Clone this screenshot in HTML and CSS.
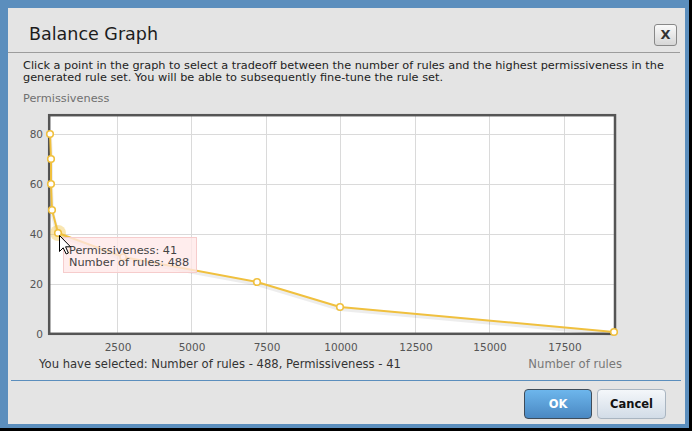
FILE: index.html
```html
<!DOCTYPE html>
<html>
<head>
<meta charset="utf-8">
<link rel="stylesheet" href="styles.css">
</head>
<body>
<div class="frame">
  <div class="dialog">
    <div class="header">
      <div class="title">Balance Graph</div>
      <button class="close">X</button>
    </div>
    <p class="desc">Click a point in the graph to select a tradeoff between the number of rules and the highest permissiveness in the<br>generated rule set. You will be able to subsequently fine-tune the rule set.</p>
    <div class="axis-title">Permissiveness</div>
    <svg class="chart" width="610" height="250" viewBox="23 106 610 250" xmlns="http://www.w3.org/2000/svg">
      <rect x="49" y="115" width="566" height="219" fill="#ffffff"/>
      <g stroke="#dadada" stroke-width="1">
        <line x1="117.5" y1="116" x2="117.5" y2="333"/>
        <line x1="191.5" y1="116" x2="191.5" y2="333"/>
        <line x1="266.5" y1="116" x2="266.5" y2="333"/>
        <line x1="340.5" y1="116" x2="340.5" y2="333"/>
        <line x1="415.5" y1="116" x2="415.5" y2="333"/>
        <line x1="489.5" y1="116" x2="489.5" y2="333"/>
        <line x1="564.5" y1="116" x2="564.5" y2="333"/>
        <line x1="50" y1="134.5" x2="614" y2="134.5"/>
        <line x1="50" y1="184.5" x2="614" y2="184.5"/>
        <line x1="50" y1="234.5" x2="614" y2="234.5"/>
        <line x1="50" y1="284.5" x2="614" y2="284.5"/>
      </g>
      <rect x="49.2" y="115.2" width="565.8" height="218.6" fill="none" stroke="#555555" stroke-width="2.5"/>
      <g class="ylab" text-anchor="end">
        <text x="43" y="138">80</text>
        <text x="43" y="188">60</text>
        <text x="43" y="238">40</text>
        <text x="43" y="288">20</text>
        <text x="43" y="338">0</text>
      </g>
      <g class="xlab" text-anchor="middle">
        <text x="118" y="351">2500</text>
        <text x="192" y="351">5000</text>
        <text x="267" y="351">7500</text>
        <text x="341" y="351">10000</text>
        <text x="416" y="351">12500</text>
        <text x="490" y="351">15000</text>
        <text x="565" y="351">17500</text>
      </g>
      <polyline points="50,134 51,159 51,184 52,210 58,233 123,257 257,282 340,307 614,332" fill="none" stroke="rgba(0,0,0,0.07)" stroke-width="4" transform="translate(0,2)"/>
      <polyline points="50,134 51,159 51,184 52,210 58,233 123,257 257,282 340,307 614,332" fill="none" stroke="#f0c03e" stroke-width="2" stroke-linejoin="round"/>
      <circle cx="58" cy="233" r="8" fill="rgba(240,192,62,0.4)"/>
      <g fill="#ffffff" stroke="#f0c03e" stroke-width="1.6">
        <circle cx="50" cy="134" r="3.3"/>
        <circle cx="51" cy="159" r="3.3"/>
        <circle cx="51" cy="184" r="3.3"/>
        <circle cx="52" cy="210" r="3.3"/>
        <circle cx="58" cy="233" r="3.3"/>
        <circle cx="123" cy="257" r="3"/>
        <circle cx="257" cy="282" r="3.3"/>
        <circle cx="340" cy="307" r="3.3"/>
        <circle cx="614" cy="332" r="3.3"/>
      </g>
      <rect x="63.5" y="237.5" width="133" height="35" fill="rgba(255,232,232,0.78)" stroke="#f6cccc" stroke-width="1"/>
      <g class="tip">
        <text x="69" y="254">Permissiveness: 41</text>
        <text x="69" y="266">Number of rules: 488</text>
      </g>
      <path d="M59.5,235.5 L59.5,251.5 L63.2,247.8 L66.2,254 L68.4,253 L65.6,246.8 L70.5,246.8 Z" fill="#ffffff" stroke="#000000" stroke-width="1" stroke-linejoin="miter"/>
    </svg>
    <div class="selected-row">
      <span class="selected">You have selected: Number of rules - 488, Permissiveness - 41</span>
      <span class="x-title">Number of rules</span>
    </div>
    <div class="footer">
      <button class="btn ok">OK</button>
      <button class="btn cancel">Cancel</button>
    </div>
  </div>
</div>
</body>
</html>
```

FILE: styles.css
```css
html, body {
  margin: 0;
  padding: 0;
  background: #000000;
  width: 692px;
  height: 431px;
  overflow: hidden;
}

.frame {
  width: 689px;
  height: 428px;
  box-sizing: border-box;
  padding: 8px 4px 4px 8px;
  background: #5b8ebd;
}

.dialog {
  width: 677px;
  height: 416px;
  background: #e4e4e4;
  display: flex;
  flex-direction: column;
  font-family: "DejaVu Sans", sans-serif;
}

.header {
  height: 44px;
  margin-right: 5px;
  padding: 0 3px 0 21px;
  border-bottom: 1px solid #9c9c9c;
  display: flex;
  justify-content: space-between;
  align-items: flex-start;
}

.title {
  margin-top: 14px;
  font-size: 17.5px;
  line-height: 24px;
  color: #1c1c1c;
}

.close {
  margin-top: 16px;
  width: 23px;
  height: 22px;
  padding: 0;
  border: 1px solid #888888;
  border-radius: 3px;
  background: linear-gradient(#fafafa, #d6d6d6);
  font-family: "DejaVu Sans", sans-serif;
  font-weight: bold;
  font-size: 13px;
  color: #333333;
  line-height: 20px;
}

.desc {
  margin: 7px 0 0 15px;
  font-size: 11.3px;
  line-height: 12px;
  color: #222222;
  white-space: nowrap;
}

.axis-title {
  margin: 8px 0 0 15px;
  font-size: 11.3px;
  line-height: 13px;
  color: #707070;
}

.chart {
  display: block;
  margin: 1px 0 0 15px;
}

.ylab text, .xlab text {
  font-family: "DejaVu Sans", sans-serif;
  font-size: 10.5px;
  fill: #555555;
}

.tip text {
  font-family: "DejaVu Sans", sans-serif;
  font-size: 11.3px;
  fill: #444444;
}

.selected-row {
  margin: 2px 63px 0 31px;
  display: flex;
  justify-content: space-between;
  font-size: 11.6px;
  line-height: 13px;
}

.selected {
  color: #333333;
}

.x-title {
  color: #777777;
}

.footer {
  margin: 9px 4px 0 3px;
  padding: 8px 15px 0 0;
  border-top: 1px solid #5b8ebd;
  display: flex;
  justify-content: flex-end;
  gap: 5px;
}

.btn {
  height: 30px;
  padding: 0;
  border-radius: 4px;
  font-family: "DejaVu Sans", sans-serif;
  font-weight: bold;
  font-size: 11.5px;
}

.ok {
  width: 68px;
  border: 1px solid #3e4c5a;
  background: linear-gradient(#6db6ec, #4a88c2);
  color: #ffffff;
}

.cancel {
  width: 69px;
  border: 1px solid #a9b5c1;
  background: linear-gradient(#f4f7fa, #d2dce7);
  color: #111111;
}
```
